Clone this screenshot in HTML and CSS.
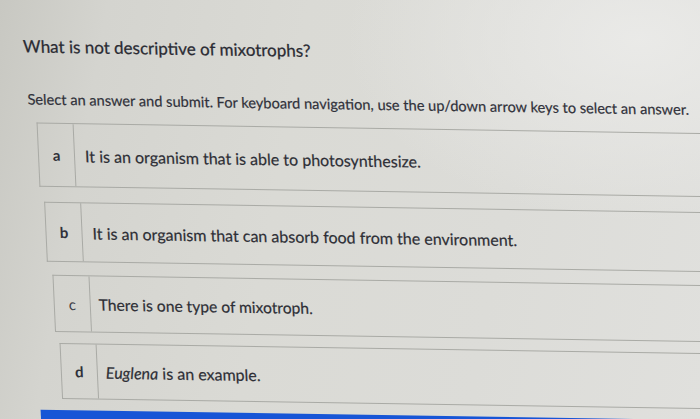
FILE: index.html
```html
<!DOCTYPE html>
<html lang="en">
<head>
<meta charset="utf-8">
<title>Question</title>
<link rel="stylesheet" href="styles.css">
</head>
<body>
<main class="quiz">
  <h1 class="quiz__prompt">What is not descriptive of mixotrophs?</h1>
  <p class="quiz__hint">Select an answer and submit. For keyboard navigation, use the up/down arrow keys to select an answer.</p>
  <ul class="choices">
    <li class="choice choice--1"><span class="choice__key">a</span><span class="choice__text"><span>It is an organism that is able to photosynthesize.</span></span></li>
    <li class="choice choice--2"><span class="choice__key">b</span><span class="choice__text"><span>It is an organism that can absorb food from the environment.</span></span></li>
    <li class="choice choice--3"><span class="choice__key choice__key--light">c</span><span class="choice__text"><span>There is one type of mixotroph.</span></span></li>
    <li class="choice choice--4"><span class="choice__key">d</span><span class="choice__text"><span><em>Euglena</em> is an example.</span></span></li>
  </ul>
  <div class="submit-bar"></div>
</main>
</body>
</html>
```
FILE: styles.css
```css
html, body {
  margin: 0;
  height: 100%;
  overflow: hidden;
}

body {
  background:
    radial-gradient(ellipse 420px 260px at 640px 40px, rgba(235, 235, 233, 0.9), rgba(235, 235, 233, 0) 70%),
    linear-gradient(100deg, #c8c8c2 0%, #d4d4cf 14%, #dadad5 40%, #dcdcd8 70%, #e0e0dd 100%);
  font-family: "Lato", "Open Sans", sans-serif;
  color: #2e2f36;
}

.quiz {
  width: 780px;
  padding: 35px 0 0 21px;
  transform-origin: 0 0;
  transform: rotate(0.9deg) skewX(3.5deg);
}

.quiz__prompt {
  margin: 0;
  font-size: 17px;
  line-height: 22px;
  font-weight: 400;
  color: #2a2b33;
  -webkit-text-stroke: 0.25px #2a2b33;
}

.quiz__hint {
  margin: 32px 0 0 2px;
  font-size: 14.6px;
  line-height: 20px;
  color: #30313a;
  -webkit-text-stroke: 0.2px #30313a;
}

.choices {
  list-style: none;
  margin: 13px 0 0 10px;
  padding: 0;
  display: flex;
  flex-direction: column;
}

.choice {
  display: flex;
  align-items: stretch;
  border: 1px solid #a9aaa5;
  border-right: none;
  font-size: 16px;
  color: #2e2f36;
  -webkit-text-stroke: 0.2px #2e2f36;
}

.choice--1 { height: 62px; }
.choice--2 { height: 58px; margin: 15px 0 0 4px; }
.choice--3 { height: 55px; margin: 13px 0 0 9px; font-size: 15.6px; }
.choice--4 { height: 54px; margin: 11px 0 0 13px; }

.choice__key {
  width: 35px;
  flex: none;
  display: flex;
  align-items: center;
  justify-content: center;
  border-right: 1px solid #a9aaa5;
  font-size: 15px;
  font-weight: 700;
  -webkit-text-stroke: 0;
  color: #30313a;
}

.choice__key--light {
  font-weight: 400;
  color: #3e3f47;
}

.choice__text {
  display: flex;
  align-items: center;
  padding-left: 10px;
}

.choice--3 .choice__text,
.choice--4 .choice__text {
  padding-left: 8px;
}

.submit-bar {
  margin: 11px 0 0 1px;
  height: 20px;
  background: #1755d6;
}
```
